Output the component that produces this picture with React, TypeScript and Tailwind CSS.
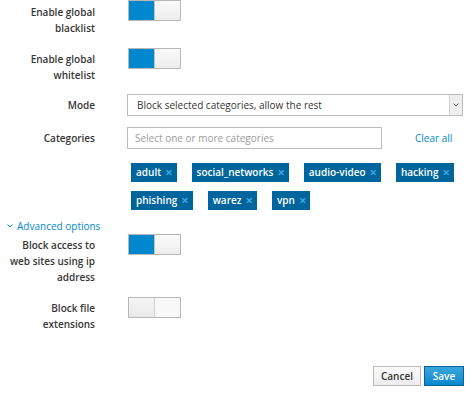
import React, { useState } from 'react'

type ToggleProps = { on: boolean; onChange: () => void }

function Toggle({ on, onChange }: ToggleProps) {
	return (
		<button
			type="button"
			onClick={onChange}
			className="flex h-[21px] w-[53px] shrink-0 overflow-hidden border border-[#b7b7b7]"
		>
			{on ? (
				<>
					<span className="h-full w-[25px] bg-[#0088ce]" />
					<span className="h-full flex-1 border-l border-[#c4c4c4] bg-gradient-to-b from-[#fafafa] to-[#ededed]" />
				</>
			) : (
				<>
					<span className="h-full w-[26px] border-r border-[#d2d2d2] bg-gradient-to-b from-[#f5f5f5] to-[#e9e9e9]" />
					<span className="h-full flex-1 bg-[#f8f8f8]" />
				</>
			)}
		</button>
	)
}

function Label({ children, className = '' }: { children: React.ReactNode; className?: string }) {
	return (
		<div className={`w-[95px] shrink-0 text-right text-[10px] font-semibold leading-[16px] text-[#363636] ${className}`}>
			{children}
		</div>
	)
}

const initialTags = ['adult', 'social_networks', 'audio-video', 'hacking', 'phishing', 'warez', 'vpn']

export default function App() {
	const [blacklist, setBlacklist] = useState(true)
	const [whitelist, setWhitelist] = useState(true)
	const [blockIp, setBlockIp] = useState(true)
	const [blockExt, setBlockExt] = useState(false)
	const [tags, setTags] = useState(initialTags)
	const [advanced, setAdvanced] = useState(true)

	return (
		<div className="h-[396px] w-[474px] bg-white font-['Open_Sans',sans-serif] text-[#363636]">
			{/* Global lists */}
			<div className="flex">
				<Label className="pt-[4px]">
					Enable global
					<br />
					blacklist
				</Label>
				<div className="ml-[33px]">
					<Toggle on={blacklist} onChange={() => setBlacklist((v) => !v)} />
				</div>
			</div>
			<div className="mt-[12px] flex">
				<Label className="pt-[3px]">
					Enable global
					<br />
					whitelist
				</Label>
				<div className="ml-[33px]">
					<Toggle on={whitelist} onChange={() => setWhitelist((v) => !v)} />
				</div>
			</div>

			{/* Mode */}
			<div className="mt-[11px] flex items-center">
				<Label>Mode</Label>
				<div className="ml-[32px] flex h-[22px] w-[336px] items-stretch border border-[#bbb] bg-white">
					<div className="flex flex-1 items-center pl-[9px] text-[10px]">Block selected categories, allow the rest</div>
					<div className="flex w-[13px] items-center justify-center border-l border-[#cfcfcf] bg-[#eee]">
						<svg width="6" height="4" viewBox="0 0 6 4" fill="none" stroke="#777" strokeWidth="1">
							<path d="M0.5 0.5 3 3 5.5 0.5" />
						</svg>
					</div>
				</div>
			</div>

			{/* Categories */}
			<div className="mt-[11px] flex items-center">
				<Label>Categories</Label>
				<div className="ml-[32px] flex h-[22px] w-[255px] items-center border border-[#bbb] pl-[7px] text-[10px] text-[#9c9c9c]">
					Select one or more categories
				</div>
				<button type="button" onClick={() => setTags([])} className="ml-[33px] text-[10px] text-[#0088ce]">
					Clear all
				</button>
			</div>

			{/* Tags */}
			<div className="ml-[131px] mt-[14px] flex w-[335px] flex-wrap gap-x-[15px] gap-y-[9px]">
				{tags.map((t) => (
					<span
						key={t}
						className="flex h-[19px] items-center bg-[#00659c] pl-[5px] pr-[4px] text-[10px] font-semibold text-white"
					>
						{t}
						<button
							type="button"
							onClick={() => setTags((ts) => ts.filter((x) => x !== t))}
							className="ml-[4px] text-[13px] font-bold leading-none text-[#39a5dc]"
						>
							×
						</button>
					</span>
				))}
			</div>

			{/* Advanced options */}
			<button
				type="button"
				onClick={() => setAdvanced((v) => !v)}
				className="ml-[7px] mt-[8px] flex items-center text-[10px] leading-[16px] text-[#0088ce]"
			>
				<svg width="6" height="4" viewBox="0 0 6 4" fill="none" stroke="#0088ce" strokeWidth="1" className="mr-[4px]">
					<path d="M0.5 0.5 3 3 5.5 0.5" />
				</svg>
				Advanced options
			</button>

			{advanced && (
				<>
					<div className="flex">
						<Label className="pt-[3px]">
							Block access to
							<br />
							web sites using ip
							<br />
							address
						</Label>
						<div className="ml-[33px]">
							<Toggle on={blockIp} onChange={() => setBlockIp((v) => !v)} />
						</div>
					</div>
					<div className="mt-[12px] flex">
						<Label className="pt-[3px]">
							Block file
							<br />
							extensions
						</Label>
						<div className="ml-[33px]">
							<Toggle on={blockExt} onChange={() => setBlockExt((v) => !v)} />
						</div>
					</div>
				</>
			)}

			{/* Actions */}
			<div className="mr-[10px] mt-[34px] flex justify-end gap-[3px]">
				<button
					type="button"
					className="h-[20px] w-[48px] border border-[#bbb] bg-gradient-to-b from-[#fafafa] to-[#ededed] text-[10px] font-semibold text-[#363636]"
				>
					Cancel
				</button>
				<button
					type="button"
					className="h-[20px] w-[40px] border border-[#00659c] bg-gradient-to-b from-[#39a5dc] to-[#0088ce] text-[10px] font-semibold text-white"
				>
					Save
				</button>
			</div>
		</div>
	)
}
